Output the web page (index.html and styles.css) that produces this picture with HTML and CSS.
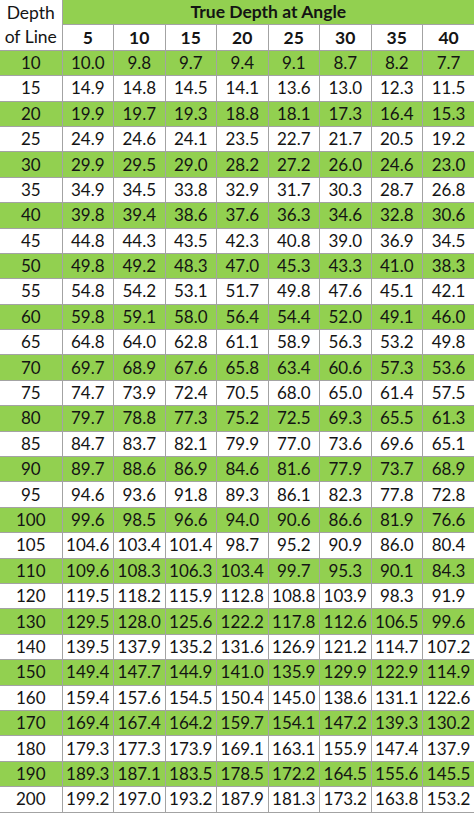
FILE: index.html
```html
<!DOCTYPE html>
<html lang="en">
<head>
<meta charset="utf-8">
<title>True Depth at Angle</title>
<link rel="stylesheet" href="styles.css">
</head>
<body>
<table class="depth-table">
<colgroup>
<col class="col-first">
<col class="col-angle"><col class="col-angle"><col class="col-angle"><col class="col-angle">
<col class="col-angle"><col class="col-angle"><col class="col-angle"><col class="col-angle">
</colgroup>
<thead>
<tr class="head-top">
<th class="line-head" rowspan="2">Depth<br>of Line</th>
<th class="angle-title" colspan="8">True Depth at Angle</th>
</tr>
<tr class="head-angles">
<th>5</th><th>10</th><th>15</th><th>20</th><th>25</th><th>30</th><th>35</th><th>40</th>
</tr>
</thead>
<tbody>
<tr class="g"><td>10</td><td>10.0</td><td>9.8</td><td>9.7</td><td>9.4</td><td>9.1</td><td>8.7</td><td>8.2</td><td>7.7</td></tr>
<tr><td>15</td><td>14.9</td><td>14.8</td><td>14.5</td><td>14.1</td><td>13.6</td><td>13.0</td><td>12.3</td><td>11.5</td></tr>
<tr class="g"><td>20</td><td>19.9</td><td>19.7</td><td>19.3</td><td>18.8</td><td>18.1</td><td>17.3</td><td>16.4</td><td>15.3</td></tr>
<tr><td>25</td><td>24.9</td><td>24.6</td><td>24.1</td><td>23.5</td><td>22.7</td><td>21.7</td><td>20.5</td><td>19.2</td></tr>
<tr class="g"><td>30</td><td>29.9</td><td>29.5</td><td>29.0</td><td>28.2</td><td>27.2</td><td>26.0</td><td>24.6</td><td>23.0</td></tr>
<tr><td>35</td><td>34.9</td><td>34.5</td><td>33.8</td><td>32.9</td><td>31.7</td><td>30.3</td><td>28.7</td><td>26.8</td></tr>
<tr class="g"><td>40</td><td>39.8</td><td>39.4</td><td>38.6</td><td>37.6</td><td>36.3</td><td>34.6</td><td>32.8</td><td>30.6</td></tr>
<tr><td>45</td><td>44.8</td><td>44.3</td><td>43.5</td><td>42.3</td><td>40.8</td><td>39.0</td><td>36.9</td><td>34.5</td></tr>
<tr class="g"><td>50</td><td>49.8</td><td>49.2</td><td>48.3</td><td>47.0</td><td>45.3</td><td>43.3</td><td>41.0</td><td>38.3</td></tr>
<tr><td>55</td><td>54.8</td><td>54.2</td><td>53.1</td><td>51.7</td><td>49.8</td><td>47.6</td><td>45.1</td><td>42.1</td></tr>
<tr class="g"><td>60</td><td>59.8</td><td>59.1</td><td>58.0</td><td>56.4</td><td>54.4</td><td>52.0</td><td>49.1</td><td>46.0</td></tr>
<tr><td>65</td><td>64.8</td><td>64.0</td><td>62.8</td><td>61.1</td><td>58.9</td><td>56.3</td><td>53.2</td><td>49.8</td></tr>
<tr class="g"><td>70</td><td>69.7</td><td>68.9</td><td>67.6</td><td>65.8</td><td>63.4</td><td>60.6</td><td>57.3</td><td>53.6</td></tr>
<tr><td>75</td><td>74.7</td><td>73.9</td><td>72.4</td><td>70.5</td><td>68.0</td><td>65.0</td><td>61.4</td><td>57.5</td></tr>
<tr class="g"><td>80</td><td>79.7</td><td>78.8</td><td>77.3</td><td>75.2</td><td>72.5</td><td>69.3</td><td>65.5</td><td>61.3</td></tr>
<tr><td>85</td><td>84.7</td><td>83.7</td><td>82.1</td><td>79.9</td><td>77.0</td><td>73.6</td><td>69.6</td><td>65.1</td></tr>
<tr class="g"><td>90</td><td>89.7</td><td>88.6</td><td>86.9</td><td>84.6</td><td>81.6</td><td>77.9</td><td>73.7</td><td>68.9</td></tr>
<tr><td>95</td><td>94.6</td><td>93.6</td><td>91.8</td><td>89.3</td><td>86.1</td><td>82.3</td><td>77.8</td><td>72.8</td></tr>
<tr class="g"><td>100</td><td>99.6</td><td>98.5</td><td>96.6</td><td>94.0</td><td>90.6</td><td>86.6</td><td>81.9</td><td>76.6</td></tr>
<tr><td>105</td><td>104.6</td><td>103.4</td><td>101.4</td><td>98.7</td><td>95.2</td><td>90.9</td><td>86.0</td><td>80.4</td></tr>
<tr class="g"><td>110</td><td>109.6</td><td>108.3</td><td>106.3</td><td>103.4</td><td>99.7</td><td>95.3</td><td>90.1</td><td>84.3</td></tr>
<tr><td>120</td><td>119.5</td><td>118.2</td><td>115.9</td><td>112.8</td><td>108.8</td><td>103.9</td><td>98.3</td><td>91.9</td></tr>
<tr class="g"><td>130</td><td>129.5</td><td>128.0</td><td>125.6</td><td>122.2</td><td>117.8</td><td>112.6</td><td>106.5</td><td>99.6</td></tr>
<tr><td>140</td><td>139.5</td><td>137.9</td><td>135.2</td><td>131.6</td><td>126.9</td><td>121.2</td><td>114.7</td><td>107.2</td></tr>
<tr class="g"><td>150</td><td>149.4</td><td>147.7</td><td>144.9</td><td>141.0</td><td>135.9</td><td>129.9</td><td>122.9</td><td>114.9</td></tr>
<tr><td>160</td><td>159.4</td><td>157.6</td><td>154.5</td><td>150.4</td><td>145.0</td><td>138.6</td><td>131.1</td><td>122.6</td></tr>
<tr class="g"><td>170</td><td>169.4</td><td>167.4</td><td>164.2</td><td>159.7</td><td>154.1</td><td>147.2</td><td>139.3</td><td>130.2</td></tr>
<tr><td>180</td><td>179.3</td><td>177.3</td><td>173.9</td><td>169.1</td><td>163.1</td><td>155.9</td><td>147.4</td><td>137.9</td></tr>
<tr class="g"><td>190</td><td>189.3</td><td>187.1</td><td>183.5</td><td>178.5</td><td>172.2</td><td>164.5</td><td>155.6</td><td>145.5</td></tr>
<tr><td>200</td><td>199.2</td><td>197.0</td><td>193.2</td><td>187.9</td><td>181.3</td><td>173.2</td><td>163.8</td><td>153.2</td></tr>
</tbody>
</table>
</body>
</html>
```

FILE: styles.css
```css
html, body {
  margin: 0;
  padding: 0;
  background: #ffffff;
}

.depth-table {
  width: 474px;
  table-layout: fixed;
  border-collapse: collapse;
  font-family: Lato, "Open Sans", "Liberation Sans", sans-serif;
  font-size: 17px;
  color: #141414;
}

.col-first { width: 62px; }
.col-angle { width: 51.5px; }

.depth-table th,
.depth-table td {
  padding: 0;
  height: 24.4px;
  line-height: 24px;
  text-align: center;
  border: 1px solid #a3a3a3;
  white-space: nowrap;
  overflow: hidden;
}

.depth-table tr > :first-child { border-left: none; }
.depth-table tr > :last-child { border-right: none; }
.head-top > th { border-top: none; }

.line-head {
  font-weight: normal;
  font-size: 17.5px;
  background: #ffffff;
  line-height: 25px;
}

.angle-title {
  background: #92d050;
  font-weight: bold;
  font-size: 17.5px;
}

.head-angles th {
  background: #ffffff;
  font-weight: bold;
  font-size: 17.5px;
}

tr.g td {
  background: #92d050;
}
```
